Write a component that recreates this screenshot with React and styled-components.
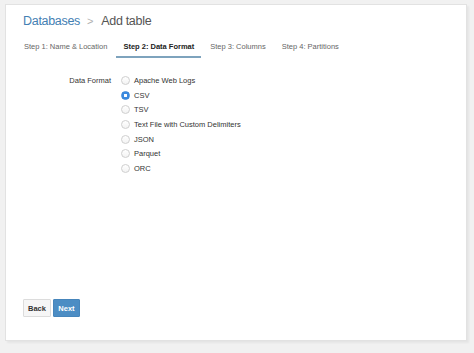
import styled, { createGlobalStyle } from "styled-components";

const GlobalStyle = createGlobalStyle`
  html, body {
    margin: 0;
    padding: 0;
    background: #f1f1f1;
    font-family: "Liberation Sans", Arial, sans-serif;
  }
`;

const formats = [
  "Apache Web Logs",
  "CSV",
  "TSV",
  "Text File with Custom Delimiters",
  "JSON",
  "Parquet",
  "ORC",
];

const steps = [
  "Step 1: Name & Location",
  "Step 2: Data Format",
  "Step 3: Columns",
  "Step 4: Partitions",
];

const App = () => {
  return (
    <Page>
      <GlobalStyle />
      <Panel>
        <Breadcrumb>
          <a>Databases</a>
          <Sep>&gt;</Sep>
          <span>Add table</span>
        </Breadcrumb>
        <Tabs>
          {steps.map((s, i) => (
            <Tab key={s} $active={i === 1}>
              {s}
            </Tab>
          ))}
        </Tabs>
        <Form>
          <Label>Data Format</Label>
          <Options>
            {formats.map((f) => (
              <Option key={f}>
                <Radio $checked={f === "CSV"} />
                {f}
              </Option>
            ))}
          </Options>
        </Form>
        <Footer>
          <Button>Back</Button>
          <Button $primary>Next</Button>
        </Footer>
      </Panel>
    </Page>
  );
};

const Page = styled.div`
  width: 474px;
  height: 353px;
  padding: 4px 0 0 5px;
  box-sizing: border-box;
`;

const Panel = styled.div`
  width: 462px;
  height: 337px;
  box-sizing: border-box;
  background: #fff;
  border: 1px solid #e2e2e2;
  box-shadow: 2px 2px 2px rgba(0, 0, 0, 0.05);
  display: flex;
  flex-direction: column;
  padding: 8px 12px 23px 11px;
`;

const Breadcrumb = styled.div`
  font-size: 12.5px;
  line-height: 16px;
  letter-spacing: -0.3px;
  color: #555;
  padding-left: 6px;
  a {
    color: #4480b3;
  }
`;

const Sep = styled.span`
  color: #b0b0b0;
  margin: 0 8px 0 7px;
  font-size: 11px;
`;

const Tabs = styled.div`
  display: flex;
  gap: 2px;
  margin-top: 7px;
`;

const Tab = styled.div`
  font-size: 7.5px;
  line-height: 10px;
  padding: 6px 7px 4px;
  color: ${(p) => (p.$active ? "#222" : "#666")};
  font-weight: ${(p) => (p.$active ? "bold" : "normal")};
  border-bottom: 2px solid ${(p) => (p.$active ? "#7ea3bd" : "transparent")};
`;

const Form = styled.div`
  display: grid;
  grid-template-columns: 51px auto;
  column-gap: 10px;
  margin-top: 15.5px;
  padding-left: 43px;
  font-size: 7.5px;
  color: #333;
`;

const Label = styled.div`
  text-align: right;
  line-height: 14.6px;
`;

const Options = styled.div`
  display: flex;
  flex-direction: column;
`;

const Option = styled.div`
  display: flex;
  align-items: center;
  gap: 4px;
  height: 14.6px;
`;

const Radio = styled.span`
  width: 9px;
  height: 9px;
  box-sizing: border-box;
  border-radius: 50%;
  border: 1px solid ${(p) => (p.$checked ? "#3a87d8" : "#cfcfcf")};
  background: ${(p) =>
    p.$checked
      ? "radial-gradient(circle, #fff 0 1.4px, #3a8ae0 1.8px)"
      : "linear-gradient(#fff, #f3f3f3)"};
`;

const Footer = styled.div`
  margin-top: auto;
  display: flex;
  gap: 2px;
  padding-left: 6px;
`;

const Button = styled.button`
  font-family: "Liberation Sans", Arial, sans-serif;
  font-size: 7.5px;
  font-weight: bold;
  height: 18px;
  padding: 0 4px;
  min-width: 27px;
  border-radius: 1px;
  border: 1px solid ${(p) => (p.$primary ? "#4685bb" : "#dcdcdc")};
  background: ${(p) => (p.$primary ? "#4c8dc4" : "#f6f6f6")};
  color: ${(p) => (p.$primary ? "#fff" : "#333")};
`;

export default App;
